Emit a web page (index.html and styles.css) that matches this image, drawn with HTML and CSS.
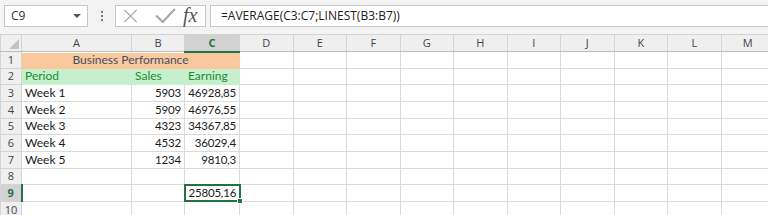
FILE: index.html
```html
<!DOCTYPE html>
<html lang="en">
<head>
    <meta charset="UTF-8">
    <title>Business Performance</title>
    <link rel="stylesheet" href="styles.css">
</head>
<body>
    <div class="toolbar">
        <div class="namebox"><span>C9</span><span class="caret"></span></div>
        <div class="grip"><i></i><i></i><i></i></div>
        <div class="fxbox">
            <svg class="ico x" viewBox="0 0 16 16"><path d="M1 1L15 15M15 1L1 15" stroke="#a6a6a6" stroke-width="1.5" fill="none"/></svg>
            <svg class="ico ok" viewBox="0 0 22 16"><path d="M1 8L8 15L21 1" stroke="#a6a6a6" stroke-width="2.2" fill="none"/></svg>
            <span class="fx">fx</span>
        </div>
        <div class="formula">=AVERAGE(C3:C7;LINEST(B3:B7))</div>
    </div>

    <table class="sheet">
        <colgroup>
            <col class="c-hd"><col class="c-a"><col class="c-b"><col class="c-c">
            <col class="c-n"><col class="c-n"><col class="c-n"><col class="c-n"><col class="c-n">
            <col class="c-n"><col class="c-n"><col class="c-n"><col class="c-n"><col class="c-n">
        </colgroup>
        <tr class="head">
            <th class="corner"><span class="tri"></span></th>
            <th>A</th><th>B</th><th class="sel">C</th><th>D</th><th>E</th><th>F</th>
            <th>G</th><th>H</th><th>I</th><th>J</th><th>K</th><th>L</th><th>M</th>
        </tr>
        <tr>
            <th class="rh">1</th>
            <td colspan="3" class="title">Business Performance</td>
            <td></td><td></td><td></td><td></td><td></td><td></td><td></td><td></td><td></td><td></td>
        </tr>
        <tr>
            <th class="rh">2</th>
            <td class="good">Period</td><td class="good">Sales</td><td class="good">Earning</td>
            <td></td><td></td><td></td><td></td><td></td><td></td><td></td><td></td><td></td><td></td>
        </tr>
        <tr>
            <th class="rh">3</th>
            <td>Week 1</td><td class="num">5903</td><td class="num">46928,85</td>
            <td></td><td></td><td></td><td></td><td></td><td></td><td></td><td></td><td></td><td></td>
        </tr>
        <tr>
            <th class="rh">4</th>
            <td>Week 2</td><td class="num">5909</td><td class="num">46976,55</td>
            <td></td><td></td><td></td><td></td><td></td><td></td><td></td><td></td><td></td><td></td>
        </tr>
        <tr>
            <th class="rh">5</th>
            <td>Week 3</td><td class="num">4323</td><td class="num">34367,85</td>
            <td></td><td></td><td></td><td></td><td></td><td></td><td></td><td></td><td></td><td></td>
        </tr>
        <tr>
            <th class="rh">6</th>
            <td>Week 4</td><td class="num">4532</td><td class="num">36029,4</td>
            <td></td><td></td><td></td><td></td><td></td><td></td><td></td><td></td><td></td><td></td>
        </tr>
        <tr>
            <th class="rh">7</th>
            <td>Week 5</td><td class="num">1234</td><td class="num">9810,3</td>
            <td></td><td></td><td></td><td></td><td></td><td></td><td></td><td></td><td></td><td></td>
        </tr>
        <tr>
            <th class="rh">8</th>
            <td></td><td></td><td></td>
            <td></td><td></td><td></td><td></td><td></td><td></td><td></td><td></td><td></td><td></td>
        </tr>
        <tr>
            <th class="rh sel">9</th>
            <td></td><td></td><td class="num active">25805,16<span class="handle"></span></td>
            <td></td><td></td><td></td><td></td><td></td><td></td><td></td><td></td><td></td><td></td>
        </tr>
        <tr>
            <th class="rh">10</th>
            <td></td><td></td><td></td>
            <td></td><td></td><td></td><td></td><td></td><td></td><td></td><td></td><td></td><td></td>
        </tr>
    </table>
</body>
</html>
```

FILE: styles.css
```css
*{margin:0; padding:0; box-sizing:border-box;}
html, body{width:768px; height:215px; overflow:hidden; background:#fff;}
body{font-family:"Open Sans", "Liberation Sans", sans-serif;}

/* ============ formula bar ============ */
.toolbar{display:flex; align-items:center; height:34px; padding:0 0 3px 4px; background:#f3f3f3;}
.namebox{display:flex; align-items:center; justify-content:space-between; width:84px; height:22px; padding:0 6px 0 6px; background:#fff; border:1px solid #c6c6c6; font-size:12px; color:#333;}
.caret{width:0; height:0; border-left:4px solid transparent; border-right:4px solid transparent; border-top:4px solid #555;}
.grip{display:flex; flex-direction:column; gap:2px; width:27px; align-items:center;}
.grip i{display:block; width:2px; height:2px; background:#777;}
.fxbox{display:flex; align-items:center; width:91px; height:22px; padding:0 0 0 7px; background:#fff; border:1px solid #c6c6c6;}
.fxbox .ico{display:block;}
.fxbox .x{width:15px; height:14px;}
.fxbox .ok{width:21px; height:15px; margin-left:17px;}
.fx{font-family:"Liberation Serif", serif; font-style:italic; font-size:20px; color:#555; line-height:1; margin-left:7px; margin-top:-2px;}
.formula{flex:1; height:22px; margin-left:4px; padding-left:10px; line-height:20px; background:#fff; border:1px solid #c6c6c6; border-right:0; font-size:12px; color:#222;}

/* ============ sheet ============ */
.sheet{border-collapse:collapse; table-layout:fixed; width:774px; font-family:Lato, "Liberation Sans", sans-serif; font-size:12px; color:#1a1a1a;}
.c-hd{width:21px;}
.c-a{width:110px;}
.c-b{width:53px;}
.c-c{width:55px;}
.c-n{width:53.5px;}
.sheet tr{height:16.67px;}
.sheet tr.head{height:17px;}
.sheet td{border:1px solid #dadada; padding:0 3px; white-space:nowrap; overflow:hidden; line-height:14px;}
.sheet th{background:#efefef; border:1px solid #d4d4d4; font-family:"Open Sans", sans-serif; font-weight:normal; font-size:11px; color:#444; line-height:14px;}
.sheet .head th{border-bottom:1px solid #bcbcbc;}
.sheet th.rh{font-size:11px; text-align:center;}
.sheet th.sel{background:#d2d2d2; color:#217346; font-weight:bold;}
.sheet .head th.sel{border-bottom:2px solid #217346;}
.sheet th.rh.sel{border-right:2px solid #217346;}
.corner{position:relative;}
.corner .tri{position:absolute; right:2px; bottom:2px; width:0; height:0; border-left:10px solid transparent; border-bottom:10px solid #c3c3c3;}
.sheet td.title{background:#f9c89c; border-color:#f9c89c; text-align:center; color:#45506a;}
.sheet td.good{background:#c6efce; border-color:#c6efce; color:#1e8c30;}
.sheet td.num{text-align:right; font-size:11.5px; letter-spacing:-0.2px; padding-right:3px;}
.sheet td.active{position:relative; border:2px solid #217346; overflow:visible;}
.handle{position:absolute; right:-4px; bottom:-4px; width:6px; height:6px; background:#217346; border:1px solid #fff;}
```
